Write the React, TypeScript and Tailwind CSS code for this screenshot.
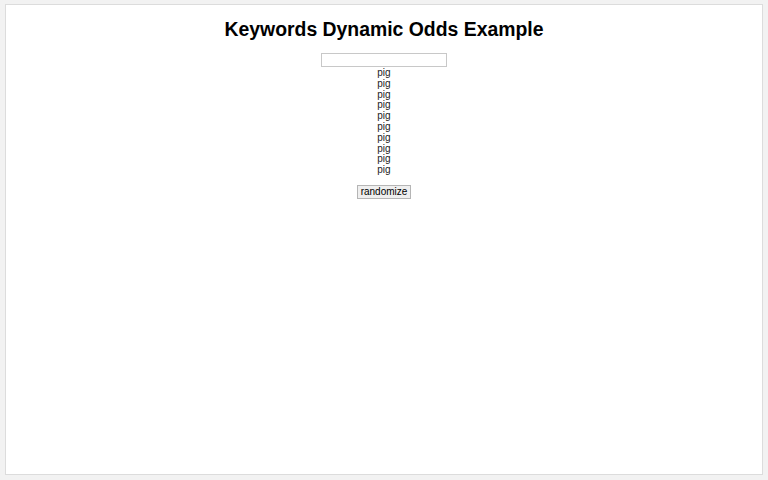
export default function App() {
  const words = Array.from({ length: 10 }, () => 'pig');

  return (
    <div className="h-[480px] w-[768px] bg-[#f2f2f2] pt-[4px] pb-[5px] px-[5px] font-['Liberation_Sans',Arial,sans-serif]">
      <div className="h-full border border-[#dcdcdc] bg-white flex flex-col items-center">
        <h1 className="mt-[14px] text-[19.4px] leading-[20px] font-bold text-black">Keywords Dynamic Odds Example</h1>
        <input
          type="text"
          className="mt-[14px] h-[14px] w-[126px] border border-[#c8c8c8] bg-white outline-none"
        />
        <ul className="mt-[1px] flex flex-col items-center text-[10px] leading-[10.8px] text-[#222]">
          {words.map((w, i) => (
            <li key={i}>{w}</li>
          ))}
        </ul>
        <button className="mt-[9px] h-[14px] px-[3px] border border-[#b5b5b5] bg-[#efefef] text-[10px] leading-[12px] text-black">
          randomize
        </button>
      </div>
    </div>
  );
}
